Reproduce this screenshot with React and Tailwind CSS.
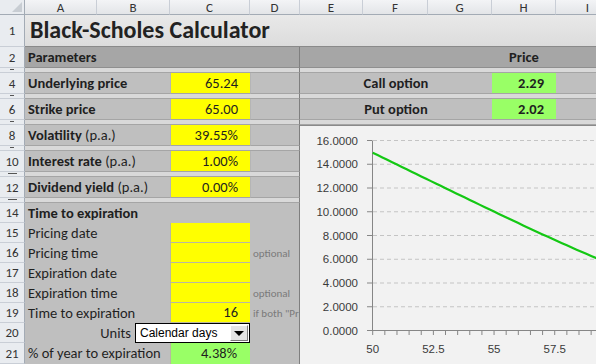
import React from "react";

function ncdf(x) {
  const t = 1 / (1 + 0.2316419 * Math.abs(x));
  const d = 0.3989423 * Math.exp((-x * x) / 2);
  const p = d * t * (0.3193815 + t * (-0.3565638 + t * (1.781478 + t * (-1.821256 + t * 1.330274))));
  return x > 0 ? 1 - p : p;
}
function putPrice(S) {
  const K = 65, sig = 0.3955, r = 0.01, T = 0.0438;
  const st = sig * Math.sqrt(T);
  const d1 = (Math.log(S / K) + (r + (sig * sig) / 2) * T) / st;
  const d2 = d1 - st;
  return K * Math.exp(-r * T) * ncdf(-d2) - S * ncdf(-d1);
}

function RowHdr({ n, cls = "" }) {
  return (
    <div className={"w-[25px] shrink-0 overflow-hidden flex items-center justify-center bg-[#e9ecf0] border-b border-r border-b-[#c9ced6] border-r-[#a3abb5] text-[13px] leading-[15px] text-[#333] " + cls}>
      {n}
    </div>
  );
}

function GapHdr({ wide = false }) {
  return (
    <div className="w-[25px] shrink-0 flex justify-center items-start pt-[1px] bg-[#e9ecf0] border-b border-r border-b-[#c9ced6] border-r-[#a3abb5]">
      <div className={(wide ? "w-[9px]" : "w-[4px]") + " h-[1px] bg-[#555]"} />
    </div>
  );
}

function Chart() {
  const x0 = 72.7, px = 24.27, y0 = 204.5, py = 11.875;
  const pts = [];
  for (let S = 50; S <= 61; S += 0.2) {
    pts.push(`${(x0 + (S - 50) * px).toFixed(2)},${(y0 - putPrice(S) * py).toFixed(2)}`);
  }
  const grid = [0, 2, 4, 6, 8, 10, 12, 14, 16];
  const ticks = [];
  for (let k = 0; k < 20; k++) ticks.push(x0 + k * 12.135);
  return (
    <svg width="296" height="238" className="block">
      {grid.map((g) => {
        const y = y0 - g * py;
        return (
          <g key={g}>
            {g > 0 && <line x1="73" x2="296" y1={y} y2={y} stroke="#c4c4c4" strokeDasharray="4 3" strokeWidth="1" />}
            <line x1="67" x2="72" y1={y} y2={y} stroke="#868686" strokeWidth="1" />
            <text x="58" y={y + 4} textAnchor="end" fontFamily="Liberation Sans, Arial, sans-serif" fontSize="11.5" fill="#3a3a3a">
              {g.toFixed(4)}
            </text>
          </g>
        );
      })}
      <line x1="72.5" x2="72.5" y1={y0 - 16 * py} y2={y0 + 0.5} stroke="#868686" strokeWidth="1" />
      <line x1="72" x2="296" y1={y0} y2={y0} stroke="#868686" strokeWidth="1" />
      {ticks.map((t, i) => (
        <line key={i} x1={t} x2={t} y1={y0} y2={y0 + 4.5} stroke="#868686" strokeWidth="1" />
      ))}
      {[["50", 0], ["52.5", 2.5], ["55", 5], ["57.5", 7.5]].map(([l, v]) => (
        <text key={l} x={x0 + v * px} y="227" textAnchor="middle" fontFamily="Liberation Sans, Arial, sans-serif" fontSize="11.5" fill="#3a3a3a">
          {l}
        </text>
      ))}
      <polyline points={pts.join(" ")} fill="none" stroke="#14c814" strokeWidth="2.2" strokeLinejoin="round" />
    </svg>
  );
}

const gapLeft = "w-[275px] shrink-0 bg-[#d9d9d9] border-b border-[#a5a5a5] border-r border-r-[#7f7f7f]";
const gapRight = "flex-1 bg-[#d9d9d9] border-b border-[#a5a5a5]";

function ParamRow({ n, label, sub, value }) {
  return (
    <div className="flex h-[21px]">
      <RowHdr n={n} />
      <div className="w-[145px] shrink-0 bg-[#bfbfbf] border-b border-[#a5a5a5] flex items-center pl-[3px] whitespace-nowrap">
        <span className="font-bold">{label}</span>
        {sub && <span>&nbsp;{sub}</span>}
      </div>
      <div className="w-[80px] shrink-0 bg-[#ffff00] border-b border-[#a5a5a5] border-l border-l-[#b5b5b5] flex items-center justify-end pr-[12px]">
        {value}
      </div>
      <div className="w-[50px] shrink-0 bg-[#bfbfbf] border-b border-[#a5a5a5] border-l border-l-[#b5b5b5] border-r border-r-[#7f7f7f]" />
    </div>
  );
}

function TimeRow({ n, label, value, note, yellow = true, bold = false }) {
  return (
    <div className="flex h-[20px]">
      <RowHdr n={n} />
      <div className={"w-[145px] shrink-0 bg-[#bfbfbf] flex items-center pl-[3px] whitespace-nowrap " + (bold ? "font-bold" : "")}>
        {label}
      </div>
      {yellow ? (
        <div className="w-[80px] shrink-0 bg-[#ffff00] border-b border-l border-[#b8b8a0] flex items-center justify-end pr-[12px]">
          {value}
        </div>
      ) : (
        <div className="w-[80px] shrink-0 bg-[#bfbfbf]" />
      )}
      <div className="w-[50px] shrink-0 bg-[#bfbfbf] border-r border-r-[#7f7f7f] overflow-hidden whitespace-nowrap flex items-center pl-[3px] text-[11px] text-[#7a7a7a]">
        {note}
      </div>
    </div>
  );
}

function PriceRow({ n, label, value }) {
  return (
    <div className="flex h-[21px]">
      <RowHdr n={n} />
      <div className="w-[145px] shrink-0 bg-[#bfbfbf] border-b border-[#a5a5a5] flex items-center pl-[3px] whitespace-nowrap">
        <span className="font-bold">{label}</span>
      </div>
      <div className="w-[80px] shrink-0 bg-[#ffff00] border-b border-[#a5a5a5] border-l border-l-[#b5b5b5] flex items-center justify-end pr-[12px]">
        {value[0]}
      </div>
      <div className="w-[50px] shrink-0 bg-[#bfbfbf] border-b border-[#a5a5a5] border-l border-l-[#b5b5b5] border-r border-r-[#7f7f7f]" />
      <div className="w-[192px] shrink-0 bg-[#bfbfbf] border-b border-[#a5a5a5] flex items-center justify-center font-bold">
        {value[1]}
      </div>
      <div className="w-[64px] shrink-0 bg-[#99ff66] border-b border-[#a5a5a5] flex items-center justify-end pr-[12px] font-bold">
        {value[2]}
      </div>
      <div className="flex-1 bg-[#bfbfbf] border-b border-[#a5a5a5]" />
    </div>
  );
}

function GapRow({ wide }) {
  return (
    <div className="flex h-[5px]">
      <GapHdr wide={wide} />
      <div className={gapLeft} />
      <div className={gapRight} />
    </div>
  );
}

function GapRowLeft({ wide }) {
  return (
    <div className="flex h-[5px]">
      <GapHdr wide={wide} />
      <div className={gapLeft} />
    </div>
  );
}

export default function App() {
  const cols = [
    ["A", "w-[72px]"],
    ["B", "w-[73px]"],
    ["C", "w-[80px]"],
    ["D", "w-[50px]"],
    ["E", "w-[63px]"],
    ["F", "w-[65px]"],
    ["G", "w-[64px]"],
    ["H", "w-[64px]"],
    ["I", "w-[64px]"],
  ];
  return (
    <div className="w-[596px] h-[364px] overflow-hidden bg-white text-[#1f1f1f] text-[14.5px] leading-none font-[family-name:Carlito,Lato,sans-serif]">
      {/* column headers */}
      <div className="flex h-[15px]">
        <div className="w-[25px] shrink-0 bg-[#e9ecf0] border-b border-r border-[#a3abb5] relative overflow-hidden">
          <div className="absolute right-[2px] bottom-[2px] w-0 h-0 border-l-[10px] border-l-transparent border-b-[10px] border-b-[#c8cdd3]" />
        </div>
        {cols.map(([l, w]) => (
          <div key={l} className={w + " shrink-0 bg-gradient-to-b from-[#f3f4f6] to-[#e3e5e8] border-b border-r border-b-[#a3abb5] border-r-[#c9ced6] flex items-center justify-center text-[13px] text-[#333]"}>
            {l}
          </div>
        ))}
      </div>
      {/* row 1 */}
      <div className="flex h-[32px]">
        <RowHdr n="1" />
        <div className="flex-1 bg-gradient-to-b from-[#e9e9e9] to-[#dcdcdc] border-b border-[#8a8a8a] flex items-end pl-[5px] pb-[4px]">
          <span className="font-bold text-[24px] leading-none text-[#222]">Black-Scholes Calculator</span>
        </div>
      </div>
      {/* row 2 */}
      <div className="flex h-[21px]">
        <RowHdr n="2" />
        <div className="w-[275px] shrink-0 bg-[#a6a6a6] border-b border-[#8f8f8f] border-r border-r-[#7f7f7f] flex items-center pl-[3px] font-bold">
          Parameters
        </div>
        <div className="w-[192px] shrink-0 bg-[#a6a6a6] border-b border-[#8f8f8f]" />
        <div className="w-[64px] shrink-0 bg-[#a6a6a6] border-b border-[#8f8f8f] flex items-center justify-center font-bold">Price</div>
        <div className="flex-1 bg-[#a6a6a6] border-b border-[#8f8f8f]" />
      </div>
      <GapRow />
      <PriceRow n="4" label="Underlying price" value={["65.24", "Call option", "2.29"]} />
      <GapRow />
      <PriceRow n="6" label="Strike price" value={["65.00", "Put option", "2.02"]} />
      <GapRow />
      {/* rows 8-21 with chart */}
      <div className="flex">
        <div className="w-[300px] shrink-0">
          <ParamRow n="8" label="Volatility" sub="(p.a.)" value="39.55%" />
          <GapRowLeft />
          <ParamRow n="10" label="Interest rate" sub="(p.a.)" value="1.00%" />
          <GapRowLeft wide />
          <ParamRow n="12" label="Dividend yield" sub="(p.a.)" value="0.00%" />
          <GapRowLeft wide />
          <TimeRow n="14" label="Time to expiration" bold yellow={false} />
          <TimeRow n="15" label="Pricing date" value="" />
          <TimeRow n="16" label="Pricing time" value="" note="optional" />
          <TimeRow n="17" label="Expiration date" value="" />
          <TimeRow n="18" label="Expiration time" value="" note="optional" />
          <TimeRow n="19" label="Time to expiration" value="16" note={'if both "Pricing'} />
          <div className="flex h-[20px]">
            <RowHdr n="20" />
            <div className="w-[110px] shrink-0 bg-[#bfbfbf] flex items-center justify-end pr-[4px]">Units</div>
            <div className="w-[115px] shrink-0 bg-[#bfbfbf] py-[1px]">
              <div className="h-[20px] -mt-[1px] bg-white border border-black flex items-center justify-between pl-[4px] pr-[1px] font-[family-name:Liberation_Sans,Arial,sans-serif] text-[12px] text-black">
                <span>Calendar days</span>
                <div className="w-[18px] h-[16px] bg-[#e4e4e4] border border-t-white border-l-white border-r-[#7a7a7a] border-b-[#7a7a7a] flex items-center justify-center">
                  <div className="w-0 h-0 border-l-[5px] border-r-[5px] border-t-[5px] border-l-transparent border-r-transparent border-t-black" />
                </div>
              </div>
            </div>
            <div className="w-[50px] shrink-0 bg-[#bfbfbf] border-r border-r-[#7f7f7f]" />
          </div>
          <div className="flex h-[21px]">
            <RowHdr n="21" />
            <div className="w-[145px] shrink-0 bg-[#bfbfbf] flex items-center pl-[3px] whitespace-nowrap">% of year to expiration</div>
            <div className="w-[80px] shrink-0 bg-[#99ff66] border-l border-[#b8b8a0] flex items-center justify-end pr-[13px]">4.38%</div>
            <div className="w-[50px] shrink-0 bg-[#bfbfbf] border-r border-r-[#7f7f7f]" />
          </div>
        </div>
        <div className="flex-1 bg-[#f2f2f2] border-t border-[#8a8a8a] overflow-hidden">
          <Chart />
        </div>
      </div>
    </div>
  );
}
